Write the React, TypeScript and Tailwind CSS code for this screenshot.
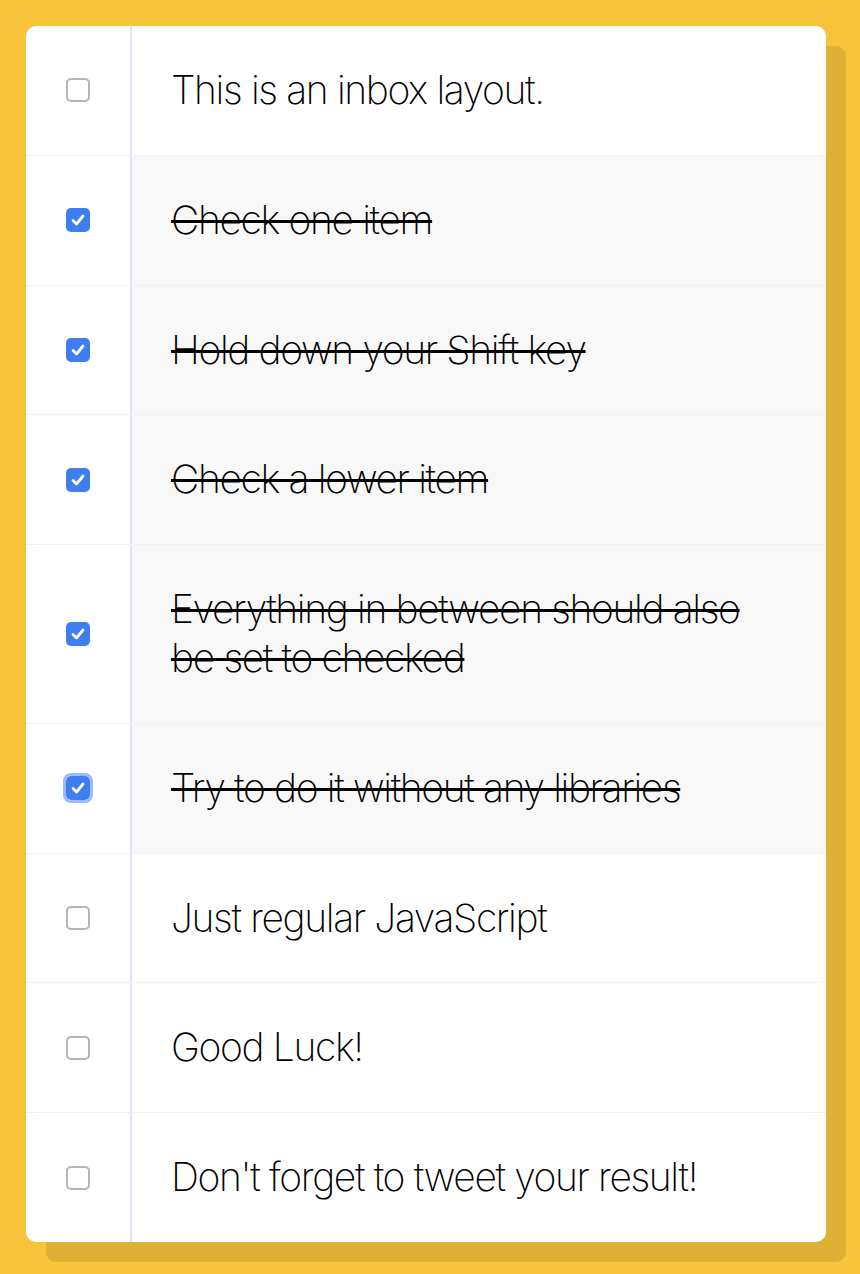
import { useState } from "react";

const initialItems = [
  { text: "This is an inbox layout.", done: false },
  { text: "Check one item", done: true },
  { text: "Hold down your Shift key", done: true },
  { text: "Check a lower item", done: true },
  { text: "Everything in between should also be set to checked", done: true },
  { text: "Try to do it without any libraries", done: true, focused: true },
  { text: "Just regular JavaScript", done: false },
  { text: "Good Luck!", done: false },
  { text: "Don't forget to tweet your result!", done: false }
];

export default function App() {
  const [items, setItems] = useState(initialItems);

  const toggle = (index: number) => {
    setItems(items.map((item, i) => (i === index ? { ...item, done: !item.done } : item)));
  };

  return (
    <div className="min-h-screen bg-[#f8c43b] px-[26px] py-[26px] font-['Inter',sans-serif]">
      <div className="w-[800px] overflow-hidden rounded-[10px] bg-white shadow-[20px_20px_0_rgba(0,0,0,0.1)]">
        {items.map((item, index) => (
          <div key={item.text} className="flex items-center border-b border-[#f1f1f1] last:border-b-0">
            <div className="flex w-[104px] shrink-0 justify-center">
              <Checkbox checked={item.done} focused={!!item.focused} onClick={() => toggle(index)} />
            </div>
            <p
              className={`flex-1 self-stretch border-l-2 border-[#dbe5f5] py-10 pr-10 pl-[39px] text-[39px] leading-[48.8px] font-extralight tracking-[-0.035em] text-black ${
                item.done ? "bg-[#f8f8f8] line-through decoration-[3px]" : ""
              }`}
            >
              {item.text}
            </p>
          </div>
        ))}
      </div>
    </div>
  );
}

function Checkbox({ checked, focused, onClick }: { checked: boolean; focused: boolean; onClick: () => void }) {
  if (!checked) {
    return (
      <button onClick={onClick} className="h-[24px] w-[24px] rounded-[5px] border-2 border-[#b5b5b5] bg-white" />
    );
  }
  return (
    <button
      onClick={onClick}
      className={`grid h-[24px] w-[24px] place-items-center rounded-[5px] bg-[#3f7ef0] ${
        focused ? "outline-[3px] outline-solid outline-[#9bbcf6]" : ""
      }`}
    >
      <svg width="18" height="18" viewBox="0 0 18 18" fill="none">
        <path d="M4 9.5 L7.5 13 L14 5" stroke="white" strokeWidth="2.8" strokeLinecap="round" strokeLinejoin="round" />
      </svg>
    </button>
  );
}
